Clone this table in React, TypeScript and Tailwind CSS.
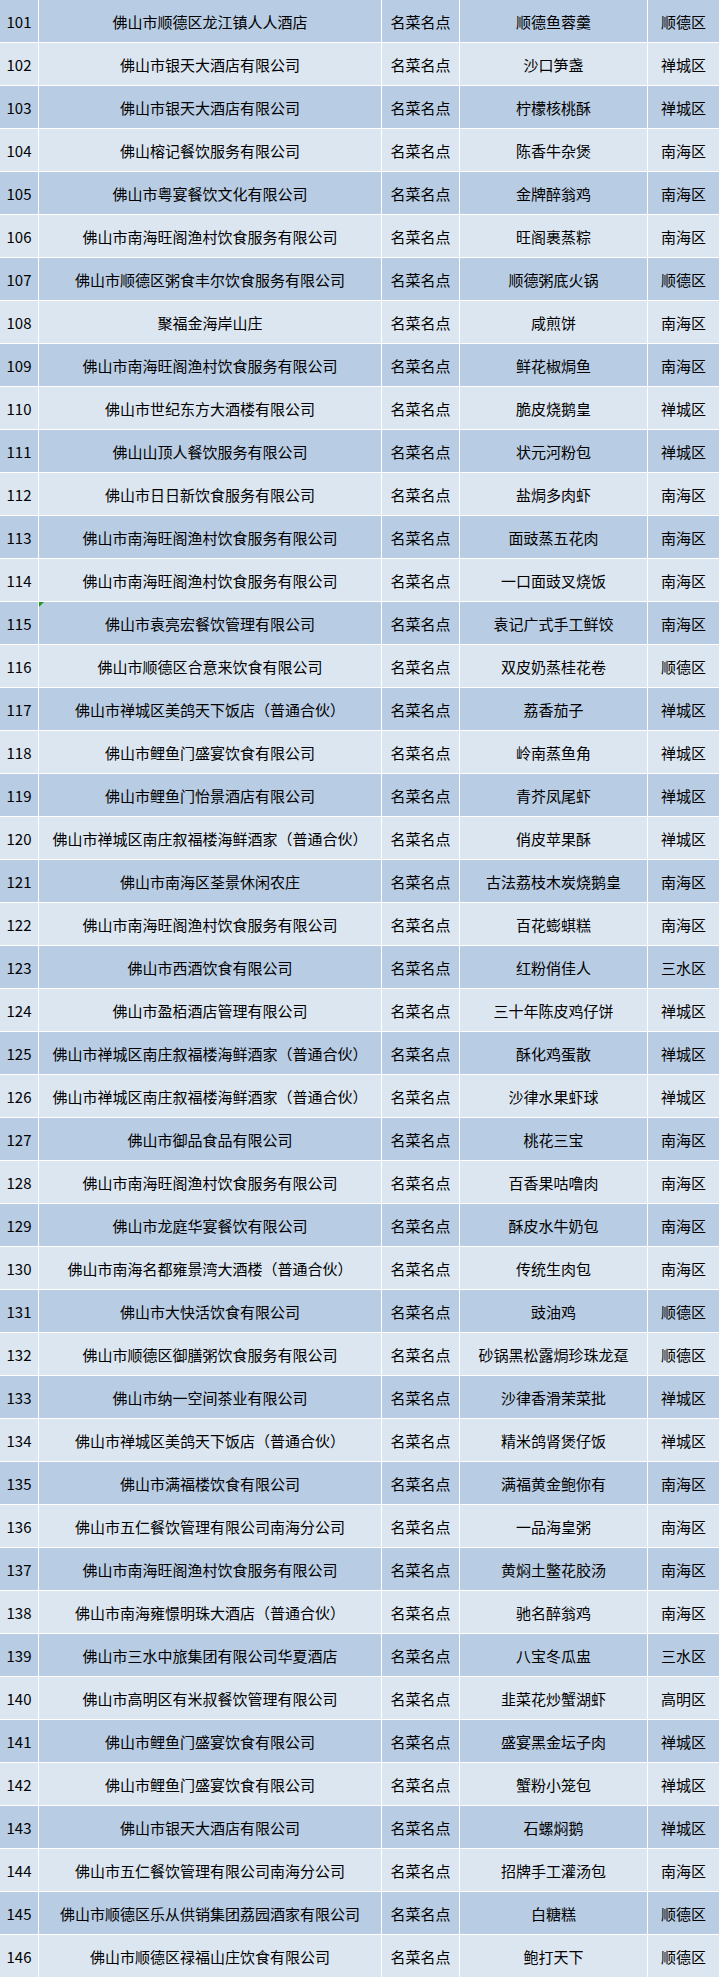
import React from "react";

type Row = [string, string, string, string];

const rows: Row[] = [
  ["101", "佛山市顺德区龙江镇人人酒店", "顺德鱼蓉羹", "顺德区"],
  ["102", "佛山市银天大酒店有限公司", "沙口笋盏", "禅城区"],
  ["103", "佛山市银天大酒店有限公司", "柠檬核桃酥", "禅城区"],
  ["104", "佛山榕记餐饮服务有限公司", "陈香牛杂煲", "南海区"],
  ["105", "佛山市粤宴餐饮文化有限公司", "金牌醉翁鸡", "南海区"],
  ["106", "佛山市南海旺阁渔村饮食服务有限公司", "旺阁裹蒸粽", "南海区"],
  ["107", "佛山市顺德区粥食丰尔饮食服务有限公司", "顺德粥底火锅", "顺德区"],
  ["108", "聚福金海岸山庄", "咸煎饼", "南海区"],
  ["109", "佛山市南海旺阁渔村饮食服务有限公司", "鲜花椒焗鱼", "南海区"],
  ["110", "佛山市世纪东方大酒楼有限公司", "脆皮烧鹅皇", "禅城区"],
  ["111", "佛山山顶人餐饮服务有限公司", "状元河粉包", "禅城区"],
  ["112", "佛山市日日新饮食服务有限公司", "盐焗多肉虾", "南海区"],
  ["113", "佛山市南海旺阁渔村饮食服务有限公司", "面豉蒸五花肉", "南海区"],
  ["114", "佛山市南海旺阁渔村饮食服务有限公司", "一口面豉叉烧饭", "南海区"],
  ["115", "佛山市袁亮宏餐饮管理有限公司", "袁记广式手工鲜饺", "南海区"],
  ["116", "佛山市顺德区合意来饮食有限公司", "双皮奶蒸桂花卷", "顺德区"],
  ["117", "佛山市禅城区美鸽天下饭店（普通合伙）", "荔香茄子", "禅城区"],
  ["118", "佛山市鲤鱼门盛宴饮食有限公司", "岭南蒸鱼角", "禅城区"],
  ["119", "佛山市鲤鱼门怡景酒店有限公司", "青芥凤尾虾", "禅城区"],
  ["120", "佛山市禅城区南庄叙福楼海鲜酒家（普通合伙）", "俏皮苹果酥", "禅城区"],
  ["121", "佛山市南海区荃景休闲农庄", "古法荔枝木炭烧鹅皇", "南海区"],
  ["122", "佛山市南海旺阁渔村饮食服务有限公司", "百花蟛蜞糕", "南海区"],
  ["123", "佛山市西酒饮食有限公司", "红粉俏佳人", "三水区"],
  ["124", "佛山市盈栢酒店管理有限公司", "三十年陈皮鸡仔饼", "禅城区"],
  ["125", "佛山市禅城区南庄叙福楼海鲜酒家（普通合伙）", "酥化鸡蛋散", "禅城区"],
  ["126", "佛山市禅城区南庄叙福楼海鲜酒家（普通合伙）", "沙律水果虾球", "禅城区"],
  ["127", "佛山市御品食品有限公司", "桃花三宝", "南海区"],
  ["128", "佛山市南海旺阁渔村饮食服务有限公司", "百香果咕噜肉", "南海区"],
  ["129", "佛山市龙庭华宴餐饮有限公司", "酥皮水牛奶包", "南海区"],
  ["130", "佛山市南海名都雍景湾大酒楼（普通合伙）", "传统生肉包", "南海区"],
  ["131", "佛山市大快活饮食有限公司", "豉油鸡", "顺德区"],
  ["132", "佛山市顺德区御膳粥饮食服务有限公司", "砂锅黑松露焗珍珠龙趸", "顺德区"],
  ["133", "佛山市纳一空间茶业有限公司", "沙律香滑茉菜批", "禅城区"],
  ["134", "佛山市禅城区美鸽天下饭店（普通合伙）", "精米鸽肾煲仔饭", "禅城区"],
  ["135", "佛山市满福楼饮食有限公司", "满福黄金鲍你有", "南海区"],
  ["136", "佛山市五仁餐饮管理有限公司南海分公司", "一品海皇粥", "南海区"],
  ["137", "佛山市南海旺阁渔村饮食服务有限公司", "黄焖土鳖花胶汤", "南海区"],
  ["138", "佛山市南海雍憬明珠大酒店（普通合伙）", "驰名醉翁鸡", "南海区"],
  ["139", "佛山市三水中旅集团有限公司华夏酒店", "八宝冬瓜盅", "三水区"],
  ["140", "佛山市高明区有米叔餐饮管理有限公司", "韭菜花炒蟹湖虾", "高明区"],
  ["141", "佛山市鲤鱼门盛宴饮食有限公司", "盛宴黑金坛子肉", "禅城区"],
  ["142", "佛山市鲤鱼门盛宴饮食有限公司", "蟹粉小笼包", "禅城区"],
  ["143", "佛山市银天大酒店有限公司", "石螺焖鹅", "禅城区"],
  ["144", "佛山市五仁餐饮管理有限公司南海分公司", "招牌手工灌汤包", "南海区"],
  ["145", "佛山市顺德区乐从供销集团荔园酒家有限公司", "白糖糕", "顺德区"],
  ["146", "佛山市顺德区禄福山庄饮食有限公司", "鲍打天下", "顺德区"],
];

export default function App() {
  return (
    <div
      className="w-[719px] bg-white text-[15px] text-black"
      style={{ fontFamily: '"Noto Sans CJK SC", "Noto Sans", sans-serif' }}
    >
      {rows.map((r, i) => {
        const dark = i % 2 === 0;
        const cell =
          "h-[42px] flex items-center justify-center whitespace-nowrap leading-none " +
          (dark ? "bg-[#b8cce4]" : "bg-[#dce6f1]");
        return (
          <div
            key={r[0]}
            className="grid grid-cols-[38px_342px_77px_187px_71px] gap-x-px pb-px bg-white"
          >
            <div className={cell}>{r[0]}</div>
            <div className={cell + " relative"}>
              {r[0] === "115" && (
                <span className="absolute left-0 top-0 w-0 h-0 border-t-[5px] border-r-[5px] border-t-[#1f9a1f] border-r-transparent" />
              )}
              {r[1]}
            </div>
            <div className={cell}>名菜名点</div>
            <div className={cell}>{r[2]}</div>
            <div className={cell}>{r[3]}</div>
          </div>
        );
      })}
    </div>
  );
}
